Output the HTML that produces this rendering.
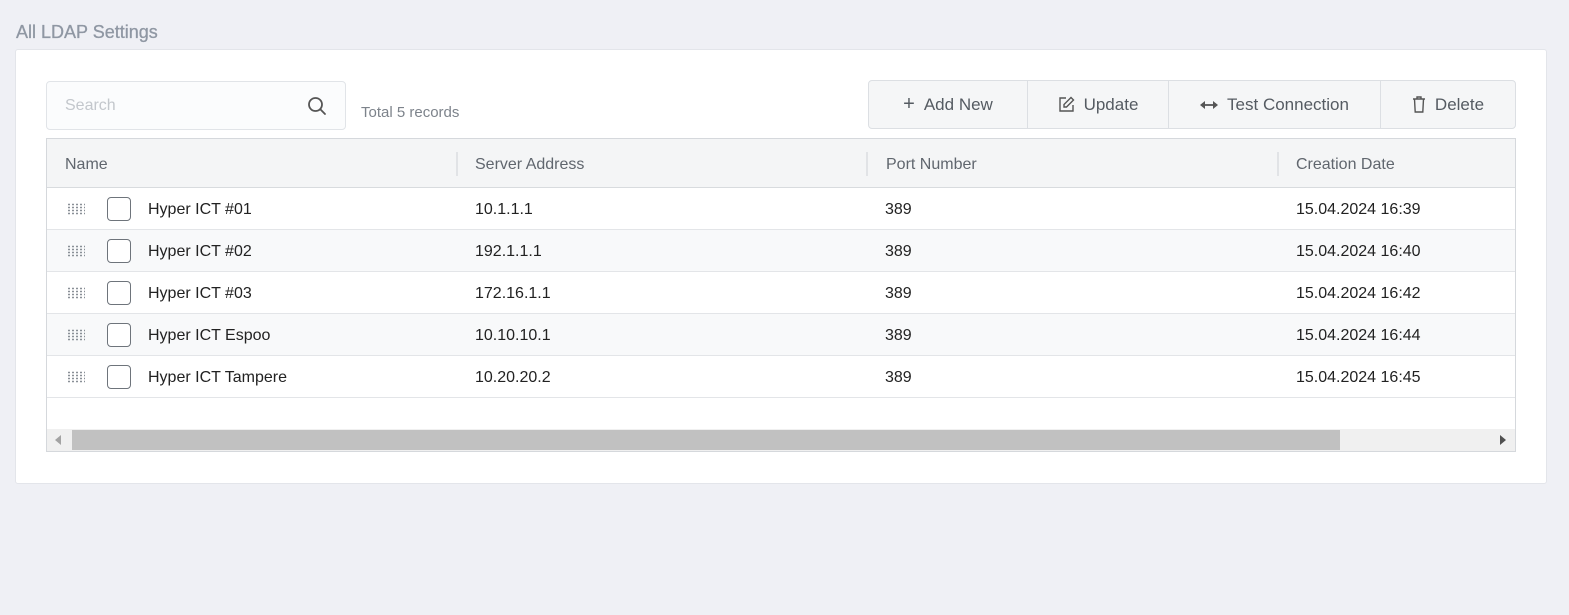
<!DOCTYPE html>
<html><head><style>
*{box-sizing:border-box;margin:0;padding:0}
body{width:1569px;height:615px;background:#eff0f5;font-family:"Liberation Sans",sans-serif;position:relative;overflow:hidden;color:#222}
.abs{position:absolute}
.title{left:16px;top:22px;font-size:18px;color:#8f97a3;-webkit-text-stroke:0.3px #8f97a3}
.card{left:15px;top:49px;width:1532px;height:435px;background:#fff;border:1px solid #e3e5ea;border-radius:3px}
.search{left:46px;top:81px;width:300px;height:49px;border:1px solid #e1e4e8;border-radius:4px;background:#fbfcfd}
.search span{position:absolute;left:18px;top:15px;font-size:16px;color:#c3c7cc}
.total{left:361px;top:104px;font-size:15px;color:#7d838b}
.btns{left:868px;top:80px;width:648px;height:49px;border:1px solid #dcdfe3;border-radius:4px;background:#f5f6f7;display:flex}
.btns div{height:100%;display:flex;align-items:center;justify-content:center;gap:9px;font-size:17px;color:#555b62;border-right:1px solid #dcdfe3}
.btns div:last-child{border-right:none}
.tbl{left:46px;top:138px;width:1470px;height:314px;border:1px solid #d5d8dc;background:#fff}
.hdr{position:absolute;left:0;top:0;width:100%;height:49px;background:#f4f5f6;border-bottom:1px solid #d8dbde;font-size:16px;color:#60666e}
.hdr span{position:absolute;top:17px}
.sep{position:absolute;top:13px;width:2px;height:24px;background:#e1e3e6}
.row{position:absolute;left:0;width:100%;height:42px;border-bottom:1px solid #e3e5e8;font-size:16px;color:#222}
.row span{position:absolute;top:13px}
.row.alt{background:#f8f9fa}
.grip{position:absolute;left:20px;top:15px;width:18px;height:12px;background-image:radial-gradient(circle,#8a9097 0.9px,transparent 1px);background-size:4px 3px}
.cb{position:absolute;left:60px;top:9px;width:24px;height:24px;border:1.5px solid #6e747b;border-radius:4px;background:#fff}
.sb{position:absolute;left:0;top:290px;width:100%;height:22px;background:#f0f0f0}
.thumb{position:absolute;left:25px;top:1px;width:1268px;height:20px;background:#c1c1c1}
</style></head><body>
<div class="abs title">All LDAP Settings</div>
<div class="abs card"></div>
<div class="abs search"><span>Search</span>
<svg style="position:absolute;left:260px;top:14px" width="20" height="20" viewBox="0 0 20 20"><circle cx="8.5" cy="8.5" r="6.5" fill="none" stroke="#555" stroke-width="1.8"/><path d="M13.3 13.3L18 18" stroke="#555" stroke-width="1.8" stroke-linecap="round"/></svg></div>
<div class="abs total">Total 5 records</div>
<div class="abs btns">
<div style="width:159px"><span style="font-size:20px;font-weight:300">+</span>Add New</div>
<div style="width:141px"><svg width="17" height="17" viewBox="0 0 17 17"><path d="M8 2H2v13h13V9" fill="none" stroke="#555" stroke-width="1.4"/><path d="M13 1.5l2.5 2.5L8.5 11H6V8.5z" fill="none" stroke="#555" stroke-width="1.4"/></svg>Update</div>
<div style="width:212px"><svg width="18" height="10" viewBox="0 0 18 10"><path d="M4 5h10" stroke="#555" stroke-width="1.8"/><path d="M0 5l5-4v8zM18 5l-5-4v8z" fill="#555"/></svg>Test Connection</div>
<div style="width:134px"><svg width="14" height="17" viewBox="0 0 14 17"><path d="M1 3h12M5 3V1h4v2M2.5 3l.7 13h7.6l.7-13" fill="none" stroke="#555" stroke-width="1.4"/></svg>Delete</div>
</div>
<div class="abs tbl">
<div class="hdr"><span style="left:18px">Name</span><div class="sep" style="left:409px"></div><span style="left:428px">Server Address</span><div class="sep" style="left:819px"></div><span style="left:839px">Port Number</span><div class="sep" style="left:1230px"></div><span style="left:1249px">Creation Date</span></div>
<div class="row" style="top:49px"><div class="grip"></div><div class="cb"></div><span style="left:101px">Hyper ICT #01</span><span style="left:428px">10.1.1.1</span><span style="left:838px">389</span><span style="left:1249px">15.04.2024 16:39</span></div>
<div class="row alt" style="top:91px"><div class="grip"></div><div class="cb"></div><span style="left:101px">Hyper ICT #02</span><span style="left:428px">192.1.1.1</span><span style="left:838px">389</span><span style="left:1249px">15.04.2024 16:40</span></div>
<div class="row" style="top:133px"><div class="grip"></div><div class="cb"></div><span style="left:101px">Hyper ICT #03</span><span style="left:428px">172.16.1.1</span><span style="left:838px">389</span><span style="left:1249px">15.04.2024 16:42</span></div>
<div class="row alt" style="top:175px"><div class="grip"></div><div class="cb"></div><span style="left:101px">Hyper ICT Espoo</span><span style="left:428px">10.10.10.1</span><span style="left:838px">389</span><span style="left:1249px">15.04.2024 16:44</span></div>
<div class="row" style="top:217px"><div class="grip"></div><div class="cb"></div><span style="left:101px">Hyper ICT Tampere</span><span style="left:428px">10.20.20.2</span><span style="left:838px">389</span><span style="left:1249px">15.04.2024 16:45</span></div>
<div class="sb"><div class="thumb"></div>
<svg style="position:absolute;left:8px;top:6px" width="6" height="10"><path d="M6 0v10L0 5z" fill="#a3a3a3"/></svg>
<svg style="position:absolute;right:9px;top:6px" width="6" height="10"><path d="M0 0v10l6-5z" fill="#505050"/></svg></div>
</div>
</body></html>
